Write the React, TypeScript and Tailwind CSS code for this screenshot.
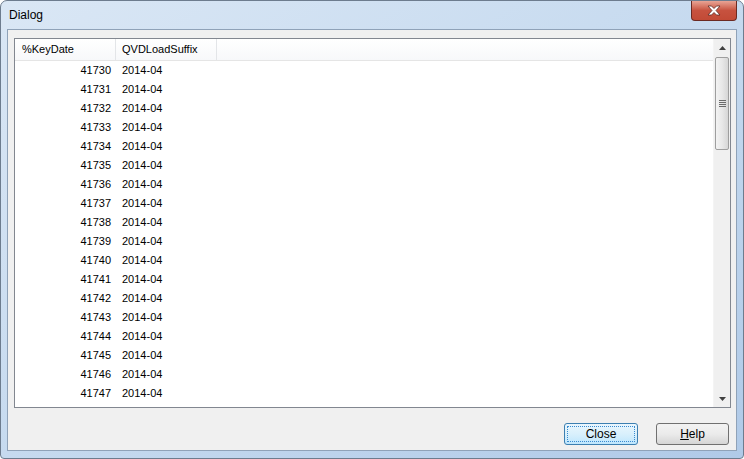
import React from 'react';

const rows = Array.from({ length: 18 }, (_, i) => 41730 + i);

function ArrowUp() {
  return (
    <svg width="7" height="4" viewBox="0 0 7 4">
      <path d="M0 4 L3.5 0 L7 4 Z" fill="#404040" />
    </svg>
  );
}

function ArrowDown() {
  return (
    <svg width="7" height="4" viewBox="0 0 7 4">
      <path d="M0 0 L3.5 4 L7 0 Z" fill="#404040" />
    </svg>
  );
}

export default function App() {
  return (
    <div
      className="w-[744px] h-[459px] overflow-hidden bg-white"
      style={{ fontFamily: '"Liberation Sans", Arial, sans-serif' }}
    >
      {/* Window frame */}
      <div className="relative w-[744px] h-[459px] rounded-t-[7px] rounded-b-[4px] border border-[#6d7c8e] bg-gradient-to-br from-[#dae7f5] via-[#c6daef] to-[#b0cae8] flex flex-col">
        {/* Title bar */}
        <div className="h-[28px] flex items-center pl-[8px] shrink-0">
          <span className="text-[12px] text-black">Dialog</span>
        </div>

        {/* Close caption button */}
        <div className="absolute top-0 right-[6px] w-[46px] h-[20px] rounded-b-[4px] border border-[#6b2a22] border-t-0 bg-gradient-to-b from-[#e8a495] via-[#c7523f] to-[#c24a36] flex items-center justify-center">
          <svg width="14" height="11" viewBox="0 0 14 11">
            <path
              d="M1 1 L4.5 1 L7 3.5 L9.5 1 L13 1 L9 5.5 L13 10 L9.5 10 L7 7.5 L4.5 10 L1 10 L5 5.5 Z"
              fill="#ffffff"
              stroke="#5a2a24"
              strokeWidth="0.8"
            />
          </svg>
        </div>

        {/* Client area */}
        <div className="mx-[6px] mb-[7px] flex-1 border border-[#8fa2b8] bg-[#f0f0f0] flex flex-col pl-[6px] pr-[5px] pt-[8px]">
          {/* List view */}
          <div className="w-[717px] h-[370px] border border-[#828790] bg-white flex overflow-hidden">
            <div className="flex-1 flex flex-col overflow-hidden">
              {/* Header */}
              <div className="h-[22px] shrink-0 flex border-b border-[#e5e5e5] bg-gradient-to-b from-[#ffffff] to-[#f7f8fa] text-[11px] text-black">
                <div className="w-[101px] border-r border-[#e3e5e8] flex items-center pl-[7px]">%KeyDate</div>
                <div className="w-[101px] border-r border-[#e3e5e8] flex items-center pl-[6px]">QVDLoadSuffix</div>
                <div className="flex-1" />
              </div>
              {/* Rows */}
              {rows.map((n) => (
                <div key={n} className="h-[19px] shrink-0 flex items-center text-[11px] text-black">
                  <div className="w-[101px] text-right pr-[5px]">{n}</div>
                  <div className="w-[101px] pl-[6px]">2014-04</div>
                </div>
              ))}
            </div>

            {/* Vertical scrollbar */}
            <div className="w-[17px] shrink-0 bg-[#f0f0f0] border-l border-[#f4f4f4] flex flex-col">
              <div className="h-[17px] flex items-center justify-center">
                <ArrowUp />
              </div>
              <div className="flex-1 flex flex-col px-[1px]">
                <div className="h-[93px] mt-[1px] rounded-[2px] border border-[#9e9e9e] bg-gradient-to-r from-[#f3f3f3] via-[#e8e8e8] to-[#d6d6d6] flex items-center justify-center">
                  <div className="flex flex-col gap-[1px]">
                    <div className="w-[7px] h-[1px] bg-[#6b6b6b]" />
                    <div className="w-[7px] h-[1px] bg-[#6b6b6b]" />
                    <div className="w-[7px] h-[1px] bg-[#6b6b6b]" />
                    <div className="w-[7px] h-[1px] bg-[#6b6b6b]" />
                  </div>
                </div>
              </div>
              <div className="h-[17px] flex items-center justify-center">
                <ArrowDown />
              </div>
            </div>
          </div>

          {/* Buttons */}
          <div className="flex justify-end gap-[18px] mt-[15px] pr-[2px] text-[12px] text-black">
            <button className="w-[74px] h-[22px] rounded-[3px] border border-[#3c7fb1] bg-gradient-to-b from-[#eaf6fd] via-[#d9f0fc] to-[#bee6fd] p-[2px]">
              <div className="w-full h-full border border-dotted border-[#3a8bd0] flex items-center justify-center">
                Close
              </div>
            </button>
            <button className="w-[73px] h-[22px] rounded-[3px] border border-[#707070] bg-gradient-to-b from-[#f2f2f2] via-[#ebebeb] to-[#d5d5d5] flex items-center justify-center">
              <span>
                <span className="underline">H</span>elp
              </span>
            </button>
          </div>
        </div>
      </div>
    </div>
  );
}
